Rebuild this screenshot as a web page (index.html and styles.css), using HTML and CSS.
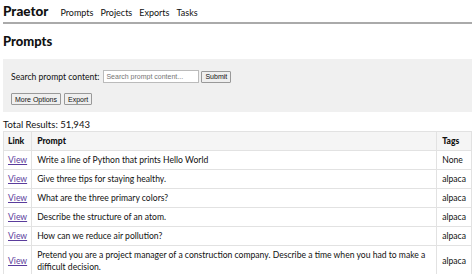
FILE: index.html
```html
<!DOCTYPE html>
<html lang="en">
<head>
    <meta charset="UTF-8">
    <title>Praetor - Prompts</title>
    <link rel="stylesheet" href="styles.css">
</head>
<body>
    <div class="header">
        <span class="brand">Praetor</span>
        <a href="#">Prompts</a>
        <a href="#">Projects</a>
        <a href="#">Exports</a>
        <a href="#">Tasks</a>
    </div>

    <h2 class="title">Prompts</h2>

    <div class="search_box">
        <form class="search_row">
            <label>Search prompt content:</label>
            <input type="text" placeholder="Search prompt content...">
            <button type="button">Submit</button>
        </form>
        <div class="btn_row">
            <button type="button">More Options</button>
            <button type="button">Export</button>
        </div>
    </div>

    <p class="total">Total Results: 51,943</p>

    <table class="prompts">
        <thead>
            <tr><th class="col_link">Link</th><th>Prompt</th><th class="col_tags">Tags</th></tr>
        </thead>
        <tbody>
            <tr><td><a href="#">View</a></td><td>Write a line of Python that prints Hello World</td><td>None</td></tr>
            <tr><td><a href="#">View</a></td><td>Give three tips for staying healthy.</td><td>alpaca</td></tr>
            <tr><td><a href="#">View</a></td><td>What are the three primary colors?</td><td>alpaca</td></tr>
            <tr><td><a href="#">View</a></td><td>Describe the structure of an atom.</td><td>alpaca</td></tr>
            <tr><td><a href="#">View</a></td><td>How can we reduce air pollution?</td><td>alpaca</td></tr>
            <tr><td><a href="#">View</a></td><td>Pretend you are a project manager of a construction company. Describe a time when you had to make a difficult decision.</td><td>alpaca</td></tr>
        </tbody>
    </table>
</body>
</html>
```

FILE: styles.css
```css
* { margin: 0; padding: 0; box-sizing: border-box; }
body {
    font-family: Lato, "Noto Sans", sans-serif;
    font-size: 9.5px;
    color: #111;
    padding: 0 2px 0 3px;
}
.header {
    display: flex;
    align-items: baseline;
    gap: 7px;
    height: 24px;
    padding-top: 3px;
    border-bottom: 2px solid #aaa;
}
.header .brand {
    font-size: 13.5px;
    font-weight: 900;
    margin-right: 5px;
}
.header a {
    color: #111;
    text-decoration: none;
    font-size: 9px;
}
.title {
    font-size: 13px;
    font-weight: 900;
    line-height: 18px;
    margin: 8px 0 9px;
}
.search_box {
    background: #f0f0f0;
    padding: 11px 8px 0;
    height: 53px;
}
.search_row {
    display: flex;
    align-items: center;
    gap: 2px;
}
.search_row label {
    font-size: 8.6px;
    margin-right: 2px;
}
.search_box input {
    width: 96px;
    height: 13px;
    font-family: "Liberation Sans", Arial, sans-serif;
    font-size: 7px;
    border: 1px solid #bbb;
    padding: 0 2px;
    background: #fff;
}
.search_box button {
    font-family: "Liberation Sans", Arial, sans-serif;
    font-size: 7px;
    height: 12px;
    padding: 0 3px;
    border: 1px solid #999;
    background: #efefef;
    border-radius: 1px;
    color: #111;
}
.btn_row {
    display: flex;
    gap: 3px;
    margin-top: 10px;
}
.total {
    margin-top: 7px;
    line-height: 12px;
}
.prompts {
    width: 100%;
    border-collapse: collapse;
    font-size: 8.6px;
}
.prompts th, .prompts td {
    border: 1px solid #e2e2e2;
    text-align: left;
    padding: 3px 5px;
    line-height: 12px;
}
.prompts th {
    background: #f5f5f5;
    font-weight: 900;
    height: 19px;
}
.prompts td { height: 19px; }
.prompts tr > :first-child {
    width: 28px;
    padding: 3px 4px;
}
.prompts .col_tags { width: 33px; }
.prompts td a {
    color: #5a3c9c;
}
```
